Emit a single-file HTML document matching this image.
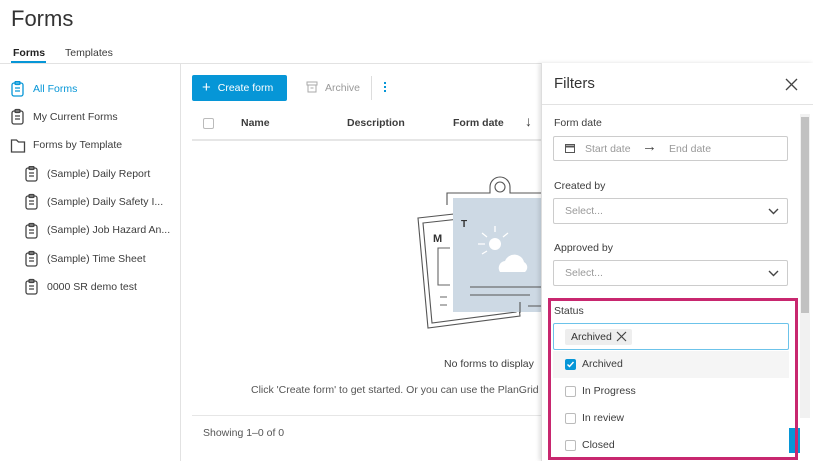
<!DOCTYPE html><html><head><style>
body{margin:0;width:813px;height:461px;position:relative;overflow:hidden;background:#fff;font-family:"Liberation Sans",sans-serif;color:#3c3c3c}
.a{position:absolute;white-space:nowrap}
.s{font-size:10.5px}
.box{position:absolute;border:1px solid #ccc;border-radius:2px;box-sizing:border-box;background:#fff}
.cb{position:absolute;width:11px;height:11px;border:1px solid #bbb;border-radius:2px;box-sizing:border-box;background:#fff}
.ph{color:#999;font-size:10.5px}
</style></head><body>
<div class="a" style="left:11px;top:6px;font-size:22px;color:#333">Forms</div>
<div class="a s" style="left:13px;top:47px;font-weight:bold;color:#222">Forms</div>
<div class="a s" style="left:65px;top:47px">Templates</div>
<div class="a" style="left:11px;top:61px;width:35px;height:2px;background:#0696d7"></div>
<div class="a" style="left:0;top:63px;width:813px;height:1px;background:#e2e2e2"></div>
<div class="a" style="left:180px;top:64px;width:1px;height:397px;background:#e2e2e2"></div>
<svg class="a" style="left:10px;top:81px" width="16" height="220" fill="none" stroke-width="1.3">
<g stroke="#0696d7"><rect x="2" y="2" width="11" height="13" rx="2"/><rect x="5" y="0.5" width="5" height="3" rx="1"/><path d="M5 7h5M5 10h5"/></g>
<g stroke="#444" transform="translate(0,28)"><rect x="2" y="2" width="11" height="13" rx="2"/><rect x="5" y="0.5" width="5" height="3" rx="1"/><path d="M5 7h5M5 10h5"/></g>
<path stroke="#444" d="M1.5 59h5l2 2h6v10h-13z"/>
</svg>
<svg class="a" style="left:24px;top:166px" width="16" height="135" fill="none" stroke="#444" stroke-width="1.3">
<g><rect x="2" y="2" width="11" height="13" rx="2"/><rect x="5" y="0.5" width="5" height="3" rx="1"/><path d="M5 7h5M5 10h5"/></g>
<g transform="translate(0,28)"><rect x="2" y="2" width="11" height="13" rx="2"/><rect x="5" y="0.5" width="5" height="3" rx="1"/><path d="M5 7h5M5 10h5"/></g>
<g transform="translate(0,57)"><rect x="2" y="2" width="11" height="13" rx="2"/><rect x="5" y="0.5" width="5" height="3" rx="1"/><path d="M5 7h5M5 10h5"/></g>
<g transform="translate(0,85)"><rect x="2" y="2" width="11" height="13" rx="2"/><rect x="5" y="0.5" width="5" height="3" rx="1"/><path d="M5 7h5M5 10h5"/></g>
<g transform="translate(0,113)"><rect x="2" y="2" width="11" height="13" rx="2"/><rect x="5" y="0.5" width="5" height="3" rx="1"/><path d="M5 7h5M5 10h5"/></g>
</svg>
<div class="a s" style="left:33px;top:83px;color:#0696d7">All Forms</div>
<div class="a s" style="left:33px;top:111px">My Current Forms</div>
<div class="a s" style="left:33px;top:139px">Forms by Template</div>
<div class="a s" style="left:47px;top:168px">(Sample) Daily Report</div>
<div class="a s" style="left:47px;top:196px">(Sample) Daily Safety I...</div>
<div class="a s" style="left:47px;top:224px">(Sample) Job Hazard An...</div>
<div class="a s" style="left:47px;top:253px">(Sample) Time Sheet</div>
<div class="a s" style="left:47px;top:281px">0000 SR demo test</div>
<div class="a" style="left:192px;top:75px;width:95px;height:26px;background:#0696d7;border-radius:2px;color:#fff;font-size:10.5px;line-height:26px"><span style="margin-left:10px;font-size:15px;vertical-align:-1px">+</span><span style="margin-left:7px">Create form</span></div>
<svg class="a" style="left:306px;top:81px" width="12" height="12" fill="none" stroke="#aaa"><rect x="1" y="1" width="10" height="3"/><path d="M2 4v7h8V4M4.5 7h3"/></svg>
<div class="a s" style="left:325px;top:82px;color:#999">Archive</div>
<div class="a" style="left:371px;top:76px;width:1px;height:24px;background:#ddd"></div>
<div class="a" style="left:384px;top:82px;width:2px;height:2px;background:#0696d7;box-shadow:0 4px #0696d7,0 8px #0696d7"></div>
<div class="cb" style="left:203px;top:118px"></div>
<div class="a s" style="left:241px;top:117px;font-weight:bold">Name</div>
<div class="a s" style="left:347px;top:117px;font-weight:bold">Description</div>
<div class="a s" style="left:453px;top:117px;font-weight:bold">Form date</div>
<div class="a" style="left:525px;top:113px;font-size:14px">↓</div>
<div class="a" style="left:192px;top:139px;width:350px;height:2px;background:#e6e6e6"></div>
<svg class="a" style="left:410px;top:170px" width="131" height="165" fill="none" stroke="#555" stroke-width="1.1">
<path d="M8 48l90-10 12 108-92 12z" fill="#fff"/>
<path d="M13 53l82-9 11 98-84 11z"/>
<path d="M37 35V23H80V17a10 10 0 0 1 20 0V23H131"/>
<circle cx="90" cy="17" r="5"/>
<rect x="43" y="28" width="88" height="114" fill="#cdd9e4" stroke="none"/>
<path d="M40 78h-12v37h12M30 127h7M30 135h7" stroke="#666"/>
<path d="M110 132v11M118 136h13"/>
<text x="23" y="72" font-family="Liberation Sans" font-size="11" font-weight="bold" fill="#333" stroke="none">M</text>
<text x="51" y="57" font-family="Liberation Sans" font-size="10" font-weight="bold" fill="#333" stroke="none">T</text>
<circle cx="85" cy="74" r="6" fill="#fff" stroke="none"/>
<path d="M85 62v-6M77 67l-5-4M75 74h-7M93 67l5-4M77 81l-5 3" stroke="#fff" stroke-width="1.3"/>
<path d="M90 102a7 7 0 0 1 5-11a10 10 0 0 1 19 1a6 6 0 0 1 1 10z" fill="#fff" stroke="none"/>
<path d="M60 117h71M60 125h60" stroke="#555"/>
</svg>
<div class="a s" style="left:444px;top:358px">No forms to display</div>
<div class="a s" style="left:251px;top:384px;color:#555">Click 'Create form' to get started. Or you can use the PlanGrid B</div>
<div class="a" style="left:192px;top:415px;width:350px;height:1px;background:#e6e6e6"></div>
<div class="a s" style="left:203px;top:427px;color:#555">Showing 1–0 of 0</div>
<div class="a" style="left:541px;top:63px;width:272px;height:398px;background:#fff;box-shadow:-2px 0 4px rgba(0,0,0,.12);border-left:1px solid #ddd"></div>
<div class="a" style="left:554px;top:75px;font-size:15px;color:#333">Filters</div>
<svg class="a" style="left:785px;top:78px" width="13" height="13" stroke="#444" stroke-width="1.3"><path d="M1 1l11 11M12 1L1 12"/></svg>
<div class="a" style="left:542px;top:104px;width:271px;height:1px;background:#e2e2e2"></div>
<div class="a" style="left:800px;top:114px;width:10px;height:304px;background:#f1f1f1"></div>
<div class="a" style="left:801px;top:117px;width:8px;height:196px;background:#c1c1c1"></div>
<div class="a s" style="left:554px;top:117px">Form date</div>
<div class="box" style="left:553px;top:136px;width:235px;height:25px"></div>
<svg class="a" style="left:565px;top:143px" width="10" height="10" fill="none" stroke="#555"><rect x="0.5" y="1.5" width="9" height="8"/><path d="M0.5 3.5h9" stroke-width="2"/></svg>
<div class="a ph" style="left:585px;top:143px">Start date</div>
<div class="a" style="left:642px;top:138px;font-size:15px;color:#444">→</div>
<div class="a ph" style="left:669px;top:143px">End date</div>
<div class="a s" style="left:554px;top:180px">Created by</div>
<div class="box" style="left:553px;top:198px;width:235px;height:26px"></div>
<div class="a ph" style="left:565px;top:205px">Select...</div>
<svg class="a" style="left:768px;top:208px" width="11" height="7" fill="none" stroke="#444" stroke-width="1.4"><path d="M1 1l4.5 4.5L10 1"/></svg>
<div class="a s" style="left:554px;top:242px">Approved by</div>
<div class="box" style="left:553px;top:260px;width:235px;height:26px"></div>
<div class="a ph" style="left:565px;top:267px">Select...</div>
<svg class="a" style="left:768px;top:270px" width="11" height="7" fill="none" stroke="#444" stroke-width="1.4"><path d="M1 1l4.5 4.5L10 1"/></svg>
<div class="a s" style="left:554px;top:305px">Status</div>
<div class="box" style="left:553px;top:323px;width:236px;height:27px;border-color:#6cc3ea;border-width:1.5px"></div>
<div class="a" style="left:565px;top:329px;width:67px;height:16px;background:#eee;border-radius:2px;font-size:10.5px;line-height:16px;color:#333"><span style="margin-left:6px">Archived</span></div>
<svg class="a" style="left:616px;top:331px" width="11" height="11" stroke="#444" stroke-width="1.2"><path d="M1 1l9 9M10 1l-9 9"/></svg>
<div class="a" style="left:553px;top:351px;width:236px;height:27px;background:#f5f5f5"></div>
<div class="a" style="left:565px;top:359px;width:11px;height:11px;background:#0696d7;border-radius:2px"></div>
<svg class="a" style="left:566px;top:360px" width="9" height="9" fill="none" stroke="#fff" stroke-width="1.4"><path d="M1.5 4.5l2 2 4-4.5"/></svg>
<div class="a s" style="left:582px;top:358px">Archived</div>
<div class="cb" style="left:565px;top:386px"></div><div class="a s" style="left:582px;top:385px">In Progress</div>
<div class="cb" style="left:565px;top:413px"></div><div class="a s" style="left:582px;top:412px">In review</div>
<div class="cb" style="left:565px;top:440px"></div><div class="a s" style="left:582px;top:439px">Closed</div>
<div class="a" style="left:789px;top:428px;width:11px;height:25px;background:#0696d7"></div>
<div class="a" style="left:548px;top:298px;width:244px;height:156px;border:3px solid #c8276f"></div>
</body></html>
